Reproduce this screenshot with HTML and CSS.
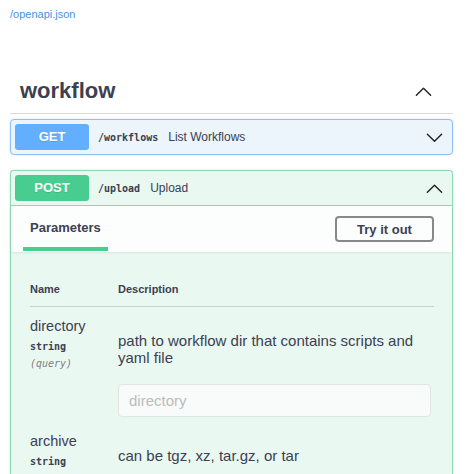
FILE: index.html
```html
<!DOCTYPE html>
<html lang="en">
<head>
    <meta charset="UTF-8">
    <meta name="viewport" content="width=device-width, initial-scale=1.0">
    <title>Workflow API</title>
    <link rel="stylesheet" href="styles.css">
</head>
<body>
    <div class="container">
        <div class="info">
            <a href="#" class="spec-link">/openapi.json</a>
        </div>

        <div class="tag-section">
            <div class="tag-header">
                <h3 class="tag-title">workflow</h3>
                <svg class="arrow" width="19" height="19" viewBox="0 0 20 20">
                    <polyline points="2.5,14 10,6.6 17.5,14" />
                </svg>
            </div>

            <div class="opblock opblock-get">
                <div class="summary">
                    <span class="method">GET</span>
                    <span class="path">/workflows</span>
                    <span class="summary-desc">List Workflows</span>
                    <svg class="arrow" width="19" height="19" viewBox="0 0 20 20">
                        <polyline points="2.5,6.6 10,14 17.5,6.6" />
                    </svg>
                </div>
            </div>

            <div class="opblock opblock-post">
                <div class="summary">
                    <span class="method">POST</span>
                    <span class="path">/upload</span>
                    <span class="summary-desc">Upload</span>
                    <svg class="arrow" width="19" height="19" viewBox="0 0 20 20">
                        <polyline points="2.5,14 10,6.6 17.5,14" />
                    </svg>
                </div>

                <div class="section-header">
                    <div class="tab">Parameters</div>
                    <button class="try-out">Try it out</button>
                </div>

                <div class="params">
                    <div class="param-row param-head">
                        <div>Name</div>
                        <div>Description</div>
                    </div>

                    <div class="param-row">
                        <div class="param-name">
                            <div class="name">directory</div>
                            <div class="type">string</div>
                            <div class="in">(query)</div>
                        </div>
                        <div class="param-desc">
                            <p>path to workflow dir that contains scripts and yaml file</p>
                            <input type="text" placeholder="directory">
                        </div>
                    </div>

                    <div class="param-row">
                        <div class="param-name">
                            <div class="name">archive</div>
                            <div class="type">string</div>
                        </div>
                        <div class="param-desc">
                            <p>can be tgz, xz, tar.gz, or tar</p>
                        </div>
                    </div>
                </div>
            </div>
        </div>
    </div>
</body>
</html>
```

FILE: styles.css
```css
body {
    margin: 0;
    font-family: "Liberation Sans", Arial, sans-serif;
    color: #3b4151;
    background-color: #fff;
}
.container {
    padding: 0 21px 0 10px;
}
.info {
    padding-top: 7px;
    font-size: 11px;
    line-height: 14px;
}
.spec-link {
    color: #4990e2;
    text-decoration: none;
}
.tag-section {
    margin-top: 44px;
}
.tag-header {
    display: flex;
    align-items: center;
    justify-content: space-between;
    padding: 11px 20px 7px 10px;
    border-bottom: 1px solid rgba(59, 65, 81, 0.2);
}
.tag-title {
    margin: 0;
    font-size: 22px;
    line-height: 30px;
    font-weight: bold;
}
.arrow polyline {
    fill: none;
    stroke: #222;
    stroke-width: 1.5;
    stroke-linecap: round;
    stroke-linejoin: round;
}
.opblock {
    border: 1px solid;
    border-radius: 4px;
    box-shadow: 0 0 3px rgba(0, 0, 0, 0.12);
}
.opblock-get {
    margin-top: 5px;
    margin-bottom: 15px;
    background-color: #ecf4fc;
    border-color: #8dc1f5;
}
.opblock-post {
    background-color: #eaf8f2;
    border-color: #8fd8b6;
    border-bottom: none;
    border-radius: 4px 4px 0 0;
}
.summary {
    display: flex;
    align-items: center;
    padding: 4px;
}
.opblock-post .summary {
    border-bottom: 1px solid #8fd8b6;
}
.method {
    width: 74px;
    height: 26px;
    line-height: 26px;
    text-align: center;
    border-radius: 3px;
    color: #fff;
    font-size: 13px;
    font-weight: bold;
    text-shadow: 0 1px 0 rgba(0, 0, 0, 0.1);
}
.opblock-get .method {
    background-color: #61affe;
}
.opblock-post .method {
    background-color: #49cc90;
}
.path {
    margin-left: 9px;
    font-family: "DejaVu Sans Mono", monospace;
    font-size: 10px;
    font-weight: bold;
}
.summary-desc {
    flex: 1;
    margin-left: 10px;
    font-size: 12px;
}
.summary .arrow {
    margin-right: 4px;
}
.section-header {
    display: flex;
    align-items: center;
    justify-content: space-between;
    min-height: 46px;
    padding: 0 18px 0 12px;
    background-color: rgba(255, 255, 255, 0.8);
    box-shadow: 0 1px 2px rgba(0, 0, 0, 0.08);
}
.tab {
    align-self: flex-start;
    padding: 12px 7px 9px;
    font-size: 13px;
    font-weight: bold;
    line-height: 20px;
    border-bottom: 4px solid #49cc90;
}
.try-out {
    width: 99px;
    height: 26px;
    padding: 0;
    font-family: inherit;
    font-size: 13px;
    font-weight: bold;
    color: #3b4151;
    background: transparent;
    border: 2px solid #888;
    border-radius: 4px;
}
.params {
    padding: 29px 18px 0 19px;
}
.param-row {
    display: grid;
    grid-template-columns: 88px 1fr;
    padding: 9px 0 5px;
}
.param-head {
    padding: 0 0 9px;
    font-size: 11px;
    font-weight: bold;
    line-height: 16px;
    border-bottom: 1px solid rgba(59, 65, 81, 0.2);
}
.name {
    font-size: 14.5px;
    line-height: 20px;
}
.type {
    margin-top: 2px;
    font-family: "DejaVu Sans Mono", monospace;
    font-size: 10px;
    font-weight: bold;
    line-height: 17px;
}
.in {
    font-family: "DejaVu Sans Mono", monospace;
    font-size: 10px;
    font-style: italic;
    line-height: 17px;
    color: #808080;
}
.param-desc p {
    margin: 16px 0 0;
    font-size: 15px;
    line-height: 17px;
}
.param-desc input {
    box-sizing: border-box;
    width: 313px;
    height: 33px;
    margin-top: 18px;
    padding: 0 10px;
    font-family: inherit;
    font-size: 15px;
    background-color: #f9fbfa;
    border: 1px solid #dfe5e2;
    border-radius: 4px;
}
.param-desc input::placeholder {
    color: #bbb;
}
```
